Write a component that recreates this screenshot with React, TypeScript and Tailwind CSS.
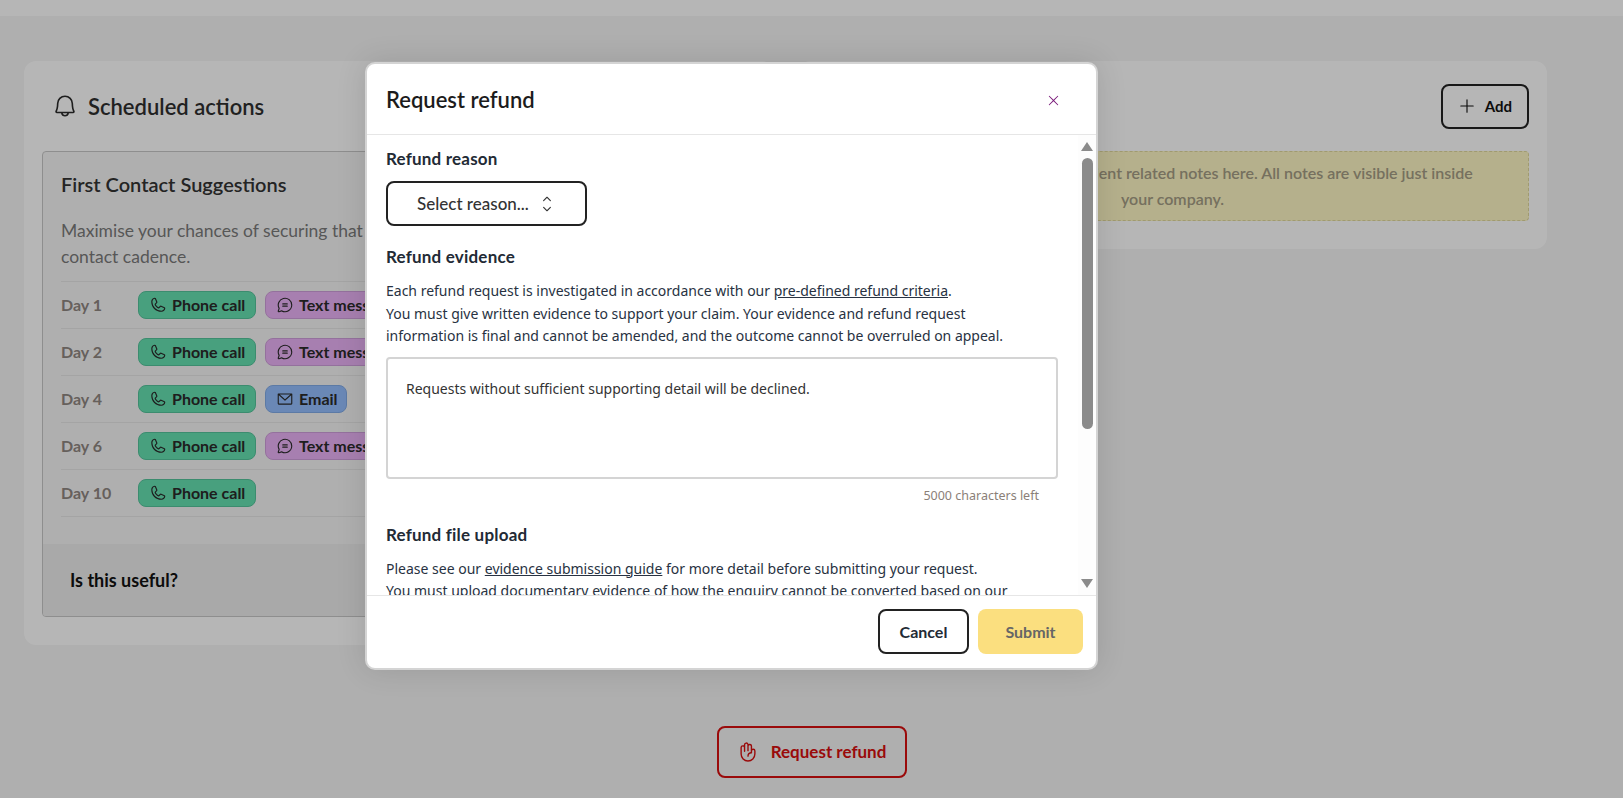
import React from "react";
import { PiBell, PiPhone, PiChatCircleText, PiEnvelopeSimple, PiPlus, PiCaretUpDown, PiX, PiHandPalm } from "react-icons/pi";

function Pill({ kind }: { kind: "phone" | "text" | "email" }) {
  if (kind === "phone")
    return (
      <span className="flex h-7 w-[118px] shrink-0 items-center gap-[5px] rounded-lg border border-[#55c59c] bg-[#65e0b1] pl-[10px] text-[16px] font-bold text-[#2a2a2a]">
        <PiPhone className="size-[18px]" />
        Phone call
      </span>
    );
  if (kind === "text")
    return (
      <span className="flex h-7 w-[140px] shrink-0 items-center gap-[5px] rounded-lg border border-[#d09fdc] bg-[#ebb3f7] pl-[10px] text-[16px] font-bold text-[#2a2a2a]">
        <PiChatCircleText className="size-[18px]" />
        Text message
      </span>
    );
  return (
    <span className="flex h-7 w-[82px] shrink-0 items-center gap-[5px] rounded-lg border border-[#82abe8] bg-[#95bfff] pl-[10px] text-[16px] font-bold text-[#2a2a2a]">
      <PiEnvelopeSimple className="size-[18px]" />
      Email
    </span>
  );
}

const rows: { day: string; pills: ("phone" | "text" | "email")[] }[] = [
  { day: "Day 1", pills: ["phone", "text"] },
  { day: "Day 2", pills: ["phone", "text"] },
  { day: "Day 4", pills: ["phone", "email"] },
  { day: "Day 6", pills: ["phone", "text"] },
  { day: "Day 10", pills: ["phone"] },
];

function Scrollbar() {
  return (
    <div className="flex w-[18px] shrink-0 flex-col items-center bg-[#fdfdfd] pt-[7px] ml-auto">
      <div className="h-0 w-0 border-x-[6.5px] border-b-[9px] border-x-transparent border-b-[#8b8b8b]" />
      <div className="mt-[7px] h-[271px] w-[11px] rounded-full bg-[#8b8b8b]" />
      <div className="mt-[150px] h-0 w-0 border-x-[6.5px] border-t-[9px] border-x-transparent border-t-[#8b8b8b]" />
    </div>
  );
}

function Modal() {
  return (
    <div className="absolute left-[365px] top-[62px] z-20 flex h-[608px] w-[733px] flex-col rounded-[10px] border-2 border-[#d4d4d4] bg-white shadow-[0_0_30px_rgba(0,0,0,0.12)]">
      <div className="flex h-[71px] shrink-0 items-center justify-between border-b border-[#e6e6e6] pl-[19px] pr-[35px]">
        <h2 className="text-[22px] font-semibold text-[#1c1c1c]">Request refund</h2>
        <PiX className="mt-[3px] size-[15px] text-[#7a1a7a]" />
      </div>
      <div className="flex min-h-0 flex-1 overflow-hidden">
        <div className="w-[672px] shrink-0 pl-[19px] pt-[12px] font-[family-name:Noto_Sans,sans-serif]">
          <h3 className="font-[family-name:Lato,sans-serif] text-[17px] font-bold leading-[24px] tracking-[0.2px] text-[#222a35]">Refund reason</h3>
          <button className="mt-[10px] flex h-[45px] w-[201px] items-center rounded-lg border-2 border-[#222] pl-[29px] font-[family-name:Lato,sans-serif] text-[17px] font-medium text-[#333]">
            Select reason...
            <PiCaretUpDown className="ml-[9px] size-[18px]" />
          </button>
          <h3 className="mt-[19px] font-[family-name:Lato,sans-serif] text-[17px] font-bold leading-[24px] tracking-[0.2px] text-[#222a35]">Refund evidence</h3>
          <p className="mt-[11px] text-[14px] leading-[22.5px] text-[#283242]">
            Each refund request is investigated in accordance with our <span className="underline">pre-defined refund criteria</span>.<br />
            You must give written evidence to support your claim. Your evidence and refund request<br />
            information is final and cannot be amended, and the outcome cannot be overruled on appeal.
          </p>
          <div className="mt-[9px] h-[122px] w-[672px] rounded-[4px] border-2 border-[#d4d4d4] pl-[18px] pt-[19px] text-[14px] leading-[22px] text-[#333]">
            Requests without sufficient supporting detail will be declined.
          </div>
          <p className="mt-[8px] text-right text-[12.5px] leading-[18px] text-[#8b8078]">5000 characters left</p>
          <h3 className="mt-[18px] font-[family-name:Lato,sans-serif] text-[17px] font-bold leading-[24px] tracking-[0.2px] text-[#222a35]">Refund file upload</h3>
          <p className="mt-[11px] text-[14px] leading-[22.5px] text-[#283242]">
            Please see our <span className="underline">evidence submission guide</span> for more detail before submitting your request.<br />
            You must upload documentary evidence of how the enquiry cannot be converted based on our
          </p>
        </div>
        <Scrollbar />
      </div>
      <div className="flex h-[73px] shrink-0 items-start justify-end gap-[9px] border-t border-[#e6e6e6] pr-[13px] pt-[13px]">
        <button className="h-[45px] w-[91px] rounded-lg border-2 border-[#222] text-[16px] font-bold text-[#222a35]">Cancel</button>
        <button className="h-[45px] w-[105px] rounded-lg bg-[#fbdf7f] text-[16px] font-bold text-[#666]">Submit</button>
      </div>
    </div>
  );
}

export default function App() {
  return (
    <div className="relative h-[798px] overflow-hidden bg-[#f5f5f5] font-[family-name:Lato,sans-serif]">
      <div className="h-4 bg-white" />
      <div className="flex items-start gap-6 pl-6 pr-[76px] pt-[45px]">
        <section className="h-[584px] w-[750px] shrink-0 rounded-xl bg-white px-[18px]">
          <div className="flex h-[90px] items-center gap-[10px] pl-[10px]">
            <PiBell className="size-[26px] text-[#2a2a2a]" />
            <h2 className="text-[22px] font-semibold text-[#2f2f2f]">Scheduled actions</h2>
          </div>
          <div className="flex h-[466px] flex-col overflow-hidden rounded-[4px] border border-[#c8c8c8] bg-[#f6f6f6]">
            <div className="flex-1 px-[18px] pt-[19px]">
              <h3 className="text-[20px] font-semibold leading-[26px] text-[#333]">First Contact Suggestions</h3>
              <p className="mt-[21px] w-[640px] text-[17.5px] leading-[26px] text-[#7a7a7a]">
                Maximise your chances of securing that customer by following this suggested first contact cadence.
              </p>
              <div className="mt-[11px] border-b border-[#e6e6e6]">
                {rows.map((r) => (
                  <div key={r.day} className="flex h-[47px] items-center gap-[9px] border-t border-[#e6e6e6]">
                    <span className="w-[68px] text-[16px] font-bold text-[#8f8781]">{r.day}</span>
                    {r.pills.map((p, i) => <Pill key={i} kind={p} />)}
                  </div>
                ))}
              </div>
            </div>
            <div className="flex h-[72px] items-center bg-[#ededed] pl-[27px]">
              <span className="text-[18px] font-bold text-[#111]">Is this useful?</span>
            </div>
          </div>
        </section>
        <section className="h-[188px] flex-1 rounded-xl bg-white px-[18px]">
          <div className="flex h-[90px] items-center justify-end">
            <button className="flex h-[45px] w-[88px] items-center justify-center gap-[9px] rounded-lg border-2 border-[#222] text-[15px] font-bold text-[#111]">
              <PiPlus className="size-[18px]" />
              Add
            </button>
          </div>
          <div className="flex h-[70px] items-center justify-center rounded-[4px] border border-dashed border-[#e0d89d] bg-[#fef7c4] text-center text-[16px] font-semibold leading-[26px] text-[#a59d85]">
            <p>Add any enquiry, customer or client related notes here. All notes are visible just inside<br />your company.</p>
          </div>
        </section>
      </div>
      <div className="absolute inset-x-0 top-[726px] flex justify-center pr-[-1px]">
        <button className="flex h-[52px] w-[190px] items-center justify-center gap-[12px] rounded-lg border-2 border-[#d80e0e] text-[17px] font-bold text-[#d80e0e]">
          <PiHandPalm className="size-[22px]" />
          Request refund
        </button>
      </div>
      <div className="absolute inset-0 z-10 bg-black/[0.286]" />
      <Modal />
    </div>
  );
}
